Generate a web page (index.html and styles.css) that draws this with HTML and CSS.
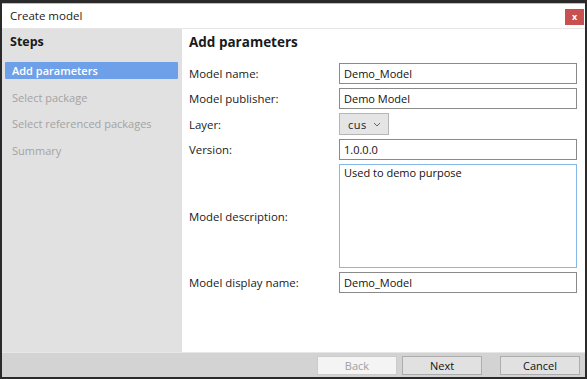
FILE: index.html
```html
<!DOCTYPE html>
<html>
<head>
<meta charset="utf-8">
<link rel="stylesheet" href="styles.css">
</head>
<body>
<div class="window">
  <div class="titlebar">
    <span class="title">Create model</span>
    <span class="close">x</span>
  </div>
  <div class="main">
    <div class="sidebar">
      <div class="side-head">Steps</div>
      <ul class="steps">
        <li class="step active">Add parameters</li>
        <li class="step">Select package</li>
        <li class="step">Select referenced packages</li>
        <li class="step">Summary</li>
      </ul>
    </div>
    <div class="content">
      <div class="heading">Add parameters</div>
      <div class="form">
        <label class="lbl">Model name:</label>
        <div class="field">Demo_Model</div>
        <label class="lbl">Model publisher:</label>
        <div class="field">Demo Model</div>
        <label class="lbl">Layer:</label>
        <div class="select-wrap"><div class="select"><span>cus</span>
          <svg class="chev" width="8" height="5" viewBox="0 0 8 5"><path d="M1 1 L4 4 L7 1" fill="none" stroke="#666" stroke-width="1"/></svg></div></div>
        <label class="lbl">Version:</label>
        <div class="field">1.0.0.0</div>
        <label class="lbl">Model description:</label>
        <div class="field area">Used to demo purpose</div>
        <label class="lbl">Model display name:</label>
        <div class="field">Demo_Model</div>
      </div>
    </div>
  </div>
  <div class="footer">
    <button class="btn disabled">Back</button>
    <button class="btn next">Next</button>
    <button class="btn cancel">Cancel</button>
  </div>
</div>
</body>
</html>
```

FILE: styles.css
```css
html, body {
  margin: 0;
  padding: 0;
  background: #2a2a2a;
  width: 587px;
  height: 379px;
  overflow: hidden;
  font-family: "Open Sans", "Noto Sans", sans-serif;
  font-size: 11px;
  color: #1a1a1a;
}
.window {
  margin: 3px 0 0 2px;
  width: 583px;
  height: 374px;
  background: #fff;
  display: flex;
  flex-direction: column;
  box-shadow: inset 0 1px 0 #9cc7ee;
}
.titlebar {
  height: 25px;
  border-bottom: 1px solid #e6e6e6;
  display: flex;
  align-items: center;
  justify-content: space-between;
  padding: 0 1px 0 8px;
}
.title {
  font-size: 11.5px;
  color: #222;
}
.close {
  width: 19px;
  height: 16px;
  background: #c75050;
  color: #fff;
  font-size: 9px;
  font-weight: bold;
  display: flex;
  align-items: center;
  justify-content: center;
  line-height: 1;
  margin-top: 2px;
}
.main {
  flex: 1;
  display: flex;
}
.sidebar {
  width: 180px;
  background: #e1e1e1;
  padding: 0 4px 0 3px;
  box-sizing: border-box;
}
.side-head {
  font-weight: 700;
  font-size: 12.5px;
  padding: 4px 0 0 5px;
  height: 21px;
  line-height: 18px;
}
.steps {
  list-style: none;
  margin: 8px 0 0 0;
  padding: 0;
  display: flex;
  flex-direction: column;
  gap: 9.6px;
}
.step {
  height: 17px;
  line-height: 17px;
  padding-left: 7px;
  color: #a3a3a3;
  border-radius: 1px;
}
.step.active {
  background: #6e9fe9;
  color: #fff;
  font-weight: 600;
}
.content {
  flex: 1;
  padding: 4px 8px 0 7px;
}
.heading {
  font-weight: 700;
  font-size: 13.5px;
  height: 18px;
  line-height: 18px;
  margin-bottom: 12px;
}
.form {
  display: grid;
  grid-template-columns: 150px 238px;
  grid-template-rows: 21px 21px 22px 21px 104px 21px;
  row-gap: 4px;
  align-items: center;
}
.lbl {
  color: #1a1a1a;
  font-size: 11.4px;
}
.field {
  height: 21px;
  box-sizing: border-box;
  border: 1px solid #8a8a8a;
  padding: 0 4px;
  line-height: 19px;
  color: #111;
}
.field.area {
  height: 104px;
  border-color: #86b8e8;
  align-self: stretch;
  line-height: 14px;
  padding-top: 1px;
}
.select-wrap {
  display: flex;
}
.select {
  width: 50px;
  height: 22px;
  box-sizing: border-box;
  background: #e5e5e5;
  border: 1px solid #b5b5b5;
  display: flex;
  align-items: center;
  justify-content: space-between;
  padding: 0 7px 0 8px;
  letter-spacing: 0.5px;
}
.chev {
  display: block;
}
.footer {
  height: 25px;
  background: #d3d3d3;
  border-top: 1px solid #e6e6e6;
  box-sizing: border-box;
  display: flex;
  align-items: center;
  padding-left: 315px;
}
.btn {
  font-family: inherit;
  font-size: 11px;
  height: 19px;
  width: 80px;
  padding: 0;
  box-sizing: border-box;
  background: #e1e1e1;
  border: 1px solid #adadad;
  color: #111;
  margin-top: 1px;
}
.btn.disabled {
  background: #f4f4f4;
  border-color: #cccccc;
  color: #a0a0a0;
}
.btn.next { margin-left: 5px; }
.btn.cancel { margin-left: 18px; }
```
